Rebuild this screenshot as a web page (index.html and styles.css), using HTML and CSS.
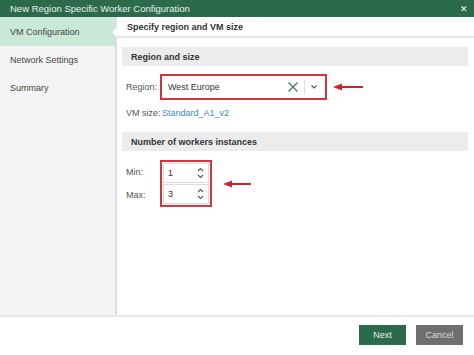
FILE: index.html
```html
<!DOCTYPE html>
<html>
<head>
<meta charset="utf-8">
<link rel="stylesheet" href="styles.css">
</head>
<body>
<div class="window">
  <div class="titlebar">
    <span class="title">New Region Specific Worker Configuration</span>
    <span class="close">✕</span>
  </div>
  <div class="body">
    <div class="sidebar">
      <div class="nav-item active">VM Configuration<span class="notch"></span></div>
      <div class="nav-item">Network Settings</div>
      <div class="nav-item">Summary</div>
    </div>
    <div class="main">
      <div class="header">Specify region and VM size</div>
      <div class="content">
        <div class="section">Region and size</div>
        <div class="row region-row">
          <span class="label">Region:</span>
          <div class="hl hl-region">
            <div class="combo">
              <span class="combo-text">West Europe</span>
              <svg class="clear" width="12" height="12" viewBox="0 0 12 12"><path d="M1.5 1.5L10.5 10.5M10.5 1.5L1.5 10.5" stroke="#4a7a66" stroke-width="1.4" fill="none"/></svg>
              <span class="sep"></span>
              <svg class="chev" width="8" height="6" viewBox="0 0 8 6"><path d="M1.5 1.5L4 4L6.5 1.5" stroke="#555" stroke-width="1.2" fill="none"/></svg>
            </div>
          </div>
          <svg class="arrow" width="31" height="8" viewBox="0 0 31 8"><path d="M30 4H8" stroke="#d2232a" stroke-width="2"/><path d="M0 4L9 0.5V7.5Z" fill="#d2232a"/></svg>
        </div>
        <div class="row vm-row">
          <span class="label">VM size:</span>
          <span class="link">Standard_A1_v2</span>
        </div>
        <div class="section section2">Number of workers instances</div>
        <div class="row spin-row">
          <div class="spin-labels">
            <span class="label">Min:</span>
            <span class="label">Max:</span>
          </div>
          <div class="hl hl-spin">
            <div class="spin">
              <span>1</span>
              <span class="arrows">
                <svg width="7" height="5" viewBox="0 0 7 5"><path d="M1 4L3.5 1.5L6 4" stroke="#555" stroke-width="1.1" fill="none"/></svg>
                <svg width="7" height="5" viewBox="0 0 7 5"><path d="M1 1L3.5 3.5L6 1" stroke="#555" stroke-width="1.1" fill="none"/></svg>
              </span>
            </div>
            <div class="spin">
              <span>3</span>
              <span class="arrows">
                <svg width="7" height="5" viewBox="0 0 7 5"><path d="M1 4L3.5 1.5L6 4" stroke="#555" stroke-width="1.1" fill="none"/></svg>
                <svg width="7" height="5" viewBox="0 0 7 5"><path d="M1 1L3.5 3.5L6 1" stroke="#555" stroke-width="1.1" fill="none"/></svg>
              </span>
            </div>
          </div>
          <svg class="arrow arrow2" width="29" height="8" viewBox="0 0 29 8"><path d="M28 4H8" stroke="#d2232a" stroke-width="2"/><path d="M0 4L9 0.5V7.5Z" fill="#d2232a"/></svg>
        </div>
      </div>
    </div>
  </div>
  <div class="footer">
    <button class="btn next">Next</button>
    <button class="btn cancel">Cancel</button>
  </div>
</div>
</body>
</html>
```

FILE: styles.css
```css
html, body {
  margin: 0;
  padding: 0;
  background: #ffffff;
}
body {
  font-family: "Liberation Sans", Arial, sans-serif;
  font-size: 9px;
  color: #333;
}
.window {
  width: 474px;
  height: 355px;
  display: flex;
  flex-direction: column;
  overflow: hidden;
}
.titlebar {
  height: 17px;
  background: #2b6b4c;
  color: #e8f2ec;
  display: flex;
  align-items: center;
  justify-content: space-between;
  padding: 0 6px 0 10px;
  font-size: 9.5px;
  flex: none;
}
.close {
  font-size: 9px;
  color: #fff;
}
.body {
  flex: none;
  height: 298px;
  display: flex;
  border-bottom: 2px solid #e8e8e8;
}
.sidebar {
  flex: none;
  width: 117px;
  background: #f4f4f4;
  border-left: 3px solid #eef8f3;
  border-right: 2px solid #dedede;
  box-sizing: border-box;
}
.nav-item {
  height: 28px;
  display: flex;
  align-items: center;
  padding-left: 10px;
  color: #444;
  position: relative;
  margin-left: -3px;
}
.nav-item.active {
  background: #c9e8d8;
  height: 29px;
}
.notch {
  position: absolute;
  right: -2px;
  top: 10px;
  width: 0;
  height: 0;
  border-top: 5px solid transparent;
  border-bottom: 5px solid transparent;
  border-right: 5px solid #ffffff;
}
.main {
  flex: 1;
  display: flex;
  flex-direction: column;
}
.header {
  height: 19px;
  border-bottom: 2px solid #e6e6e6;
  display: flex;
  align-items: center;
  padding-left: 10px;
  font-weight: bold;
  color: #333;
  flex: none;
}
.content {
  padding: 9px 6px 0 5px;
}
.section {
  height: 19px;
  background: #ececec;
  display: flex;
  align-items: center;
  padding-left: 9px;
  font-weight: bold;
  color: #333;
}
.section2 {
  margin-top: 11px;
}
.row {
  display: flex;
  align-items: center;
  padding-left: 4px;
}
.label {
  color: #555;
}
.region-row {
  margin-top: 8px;
  height: 26px;
}
.region-row .label {
  width: 34px;
}
.hl {
  border: 2px solid #d6343c;
  box-sizing: border-box;
  background: #fff;
}
.hl-region {
  width: 167px;
  height: 26px;
  padding: 1px;
}
.combo {
  height: 100%;
  display: flex;
  align-items: center;
  padding-left: 5px;
  box-sizing: border-box;
}
.combo-text {
  flex: 1;
  color: #333;
}
.clear {
  margin-right: 5px;
}
.sep {
  width: 1px;
  height: 14px;
  background: #ddd;
  margin-right: 5px;
}
.chev {
  margin-right: 6px;
}
.arrow {
  margin-left: 6px;
}
.vm-row {
  margin-top: 4px;
  height: 17px;
}
.vm-row .label {
  width: 36px;
}
.link {
  color: #3b8eb8;
}
.spin-row {
  margin-top: 9px;
}
.spin-labels {
  width: 34px;
  display: flex;
  flex-direction: column;
  justify-content: space-around;
  height: 47px;
}
.hl-spin {
  width: 52px;
  height: 47px;
  padding: 1px;
  display: flex;
  flex-direction: column;
  gap: 1px;
}
.spin {
  flex: 1;
  border: 1px solid #dcdcdc;
  display: flex;
  align-items: center;
  justify-content: space-between;
  padding: 0 4px 0 4px;
}
.arrows {
  display: flex;
  flex-direction: column;
  gap: 2px;
}
.arrows svg {
  display: block;
}
.arrow2 {
  margin-left: 11px;
}
.footer {
  flex: 1;
  display: flex;
  justify-content: flex-end;
  align-items: flex-start;
  gap: 10px;
  padding: 8px 11px 0 0;
}
.btn {
  width: 47px;
  height: 20px;
  border: none;
  font-family: "Liberation Sans", Arial, sans-serif;
  font-size: 9px;
  color: #e8f0ec;
  padding: 0;
}
.next {
  background: #2b6b4c;
}
.cancel {
  background: #6f6f6f;
  color: #d8d8d8;
}
```
